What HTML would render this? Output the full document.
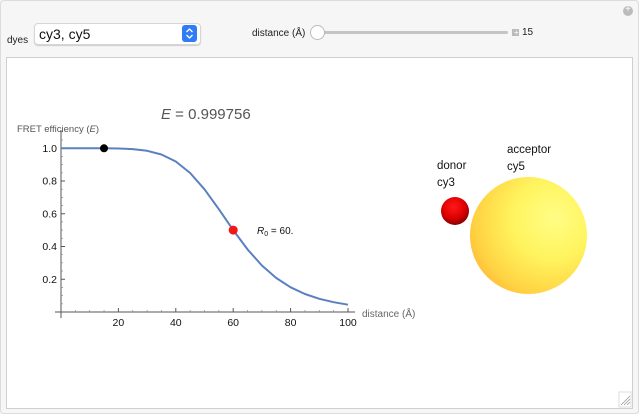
<!DOCTYPE html>
<html><head><meta charset="utf-8"><style>
html,body{margin:0;padding:0;}
body{width:639px;height:414px;background:#f6f6f6;font-family:"Liberation Sans",sans-serif;position:relative;overflow:hidden;}
.outer{position:absolute;left:0;top:0;width:637px;height:412px;border:1px solid #dcdcdc;border-radius:4px;background:#f6f6f6;}
.panel{position:absolute;left:6px;top:57px;width:625px;height:350px;background:#fff;border:1px solid #cfcfcf;}
.t{position:absolute;white-space:nowrap;}
</style></head><body>
<div class="outer"></div>
<div class="t" style="left:7px;top:35px;font-size:10px;color:#222;">dyes</div>
<div style="position:absolute;left:34px;top:23px;width:165px;height:20px;background:#fff;border:1px solid #d6d6d6;border-radius:4px;box-shadow:0 1px 1px #ccc;"></div>
<div class="t" style="left:39px;top:26px;font-size:14px;color:#111;">cy3, cy5</div>
<div style="position:absolute;left:182px;top:25px;width:15px;height:17px;background:#2f7cf6;border-radius:3px;"></div>
<svg style="position:absolute;left:182px;top:25px" width="15" height="17"><path d="M4.5 7 L7.5 4 L10.5 7 M4.5 10 L7.5 13 L10.5 10" stroke="#fff" stroke-width="1.3" fill="none"/></svg>
<div class="t" style="left:252px;top:28px;font-size:10px;color:#222;">distance (Å)</div>
<div style="position:absolute;left:312px;top:31px;width:196px;height:3px;background:#c4c4c4;border-radius:2px;"></div>
<div style="position:absolute;left:310px;top:25px;width:15px;height:15px;background:#fff;border:1px solid #bbb;border-radius:50%;box-sizing:border-box;"></div>
<div style="position:absolute;left:512px;top:29px;width:7px;height:7px;background:#bbb;"></div>
<div class="t" style="left:514px;top:29px;font-size:8px;color:#fff;line-height:7px;">+</div>
<div class="t" style="left:522px;top:27px;font-size:10px;color:#222;">15</div>
<div style="position:absolute;left:623px;top:6px;width:10px;height:10px;border-radius:50%;background:#bbb;"></div>
<div class="t" style="left:625px;top:4px;font-size:10px;color:#fff;">+</div>
<div class="panel"></div>
<svg style="position:absolute;left:0;top:0" width="639" height="414" font-family="Liberation Sans, sans-serif">
<g stroke="#555" stroke-width="1">
<line x1="61" y1="130" x2="61" y2="318"/>
<line x1="55" y1="312" x2="355" y2="312"/>
<line x1="118.4" y1="312" x2="118.4" y2="308"/><line x1="175.8" y1="312" x2="175.8" y2="308"/><line x1="233.2" y1="312" x2="233.2" y2="308"/><line x1="290.6" y1="312" x2="290.6" y2="308"/><line x1="348" y1="312" x2="348" y2="308"/>
<line x1="61" y1="279.25" x2="65" y2="279.25"/><line x1="61" y1="246.5" x2="65" y2="246.5"/><line x1="61" y1="213.75" x2="65" y2="213.75"/><line x1="61" y1="181" x2="65" y2="181"/><line x1="61" y1="148.25" x2="65" y2="148.25"/>
</g>
<g stroke="#888" stroke-width="0.7">
<path d="M75.35 312v-2M89.7 312v-2M104.05 312v-2M132.75 312v-2M147.1 312v-2M161.45 312v-2M190.15 312v-2M204.5 312v-2M218.85 312v-2M247.55 312v-2M261.9 312v-2M276.25 312v-2M304.95 312v-2M319.3 312v-2M333.65 312v-2"/>
<path d="M61 303.8h2M61 295.6h2M61 287.4h2M61 271h2M61 262.8h2M61 254.7h2M61 238.3h2M61 230.1h2M61 221.9h2M61 205.6h2M61 197.4h2M61 189.2h2M61 172.8h2M61 164.6h2M61 156.4h2M61 140h2M61 131.9h2"/>
</g>
<g font-size="10.5" fill="#111" text-anchor="middle">
<text x="118.4" y="326">20</text><text x="175.8" y="326">40</text><text x="233.2" y="326">60</text><text x="290.6" y="326">80</text><text x="348" y="326">100</text>
</g>
<g font-size="10.5" fill="#111" text-anchor="end">
<text x="57" y="283">0.2</text><text x="57" y="250">0.4</text><text x="57" y="217.5">0.6</text><text x="57" y="184.5">0.8</text><text x="57" y="152">1.0</text>
</g>
<text x="362" y="317" font-size="10" fill="#666">distance (Å)</text>
<text x="17" y="132" font-size="9.5" fill="#555">FRET efficiency (<tspan font-style="italic">E</tspan>)</text>
<text x="161" y="119" font-size="15" fill="#555"><tspan font-style="italic">E</tspan> = 0.999756</text>
<polyline fill="none" stroke="#5a80c0" stroke-width="2" stroke-linejoin="round" points="61,148.25 75.35,148.25 89.7,148.25 104.05,148.3 118.4,148.5 132.75,149.1 147.1,150.8 161.45,154.5 175.8,161.5 190.15,173 204.5,189.3 218.85,209.2 233.2,230.1 247.55,249.4 261.9,265.5 276.25,278 290.6,287.3 304.95,294 319.3,298.8 333.65,302.2 348,304.7"/>
<circle cx="104" cy="148.3" r="4" fill="#000"/>
<circle cx="233.2" cy="230.1" r="4.5" fill="#f01818"/>
<text x="257" y="234" font-size="10" fill="#111"><tspan font-style="italic">R</tspan><tspan font-size="7" dy="2">0</tspan><tspan dy="-2"> = 60.</tspan></text>
<defs>
<radialGradient id="rg" cx="0.45" cy="0.35" r="0.65"><stop offset="0" stop-color="#ff1a1a"/><stop offset="0.6" stop-color="#e00000"/><stop offset="1" stop-color="#8a0000"/></radialGradient>
<radialGradient id="yg" cx="0.68" cy="0.38" r="0.85" fx="0.72" fy="0.35"><stop offset="0" stop-color="#fffd85"/><stop offset="0.4" stop-color="#fff45e"/><stop offset="0.75" stop-color="#ffd343"/><stop offset="1" stop-color="#ffa82c"/></radialGradient>
</defs>
<circle cx="455" cy="211" r="14" fill="url(#rg)"/>
<circle cx="528.5" cy="235.5" r="58.5" fill="url(#yg)"/>
<g font-size="11.5" fill="#111">
<text x="437" y="169">donor</text><text x="437" y="186">cy3</text>
<text x="507" y="153">acceptor</text><text x="507" y="170">cy5</text>
</g>
<rect x="619" y="392" width="12" height="15" fill="#fff" stroke="#ddd"/>
<path d="M621 405 L630 396 M624 405 L630 399 M627 405 L630 402" stroke="#999" stroke-width="0.8"/>
</svg>
</body></html>
